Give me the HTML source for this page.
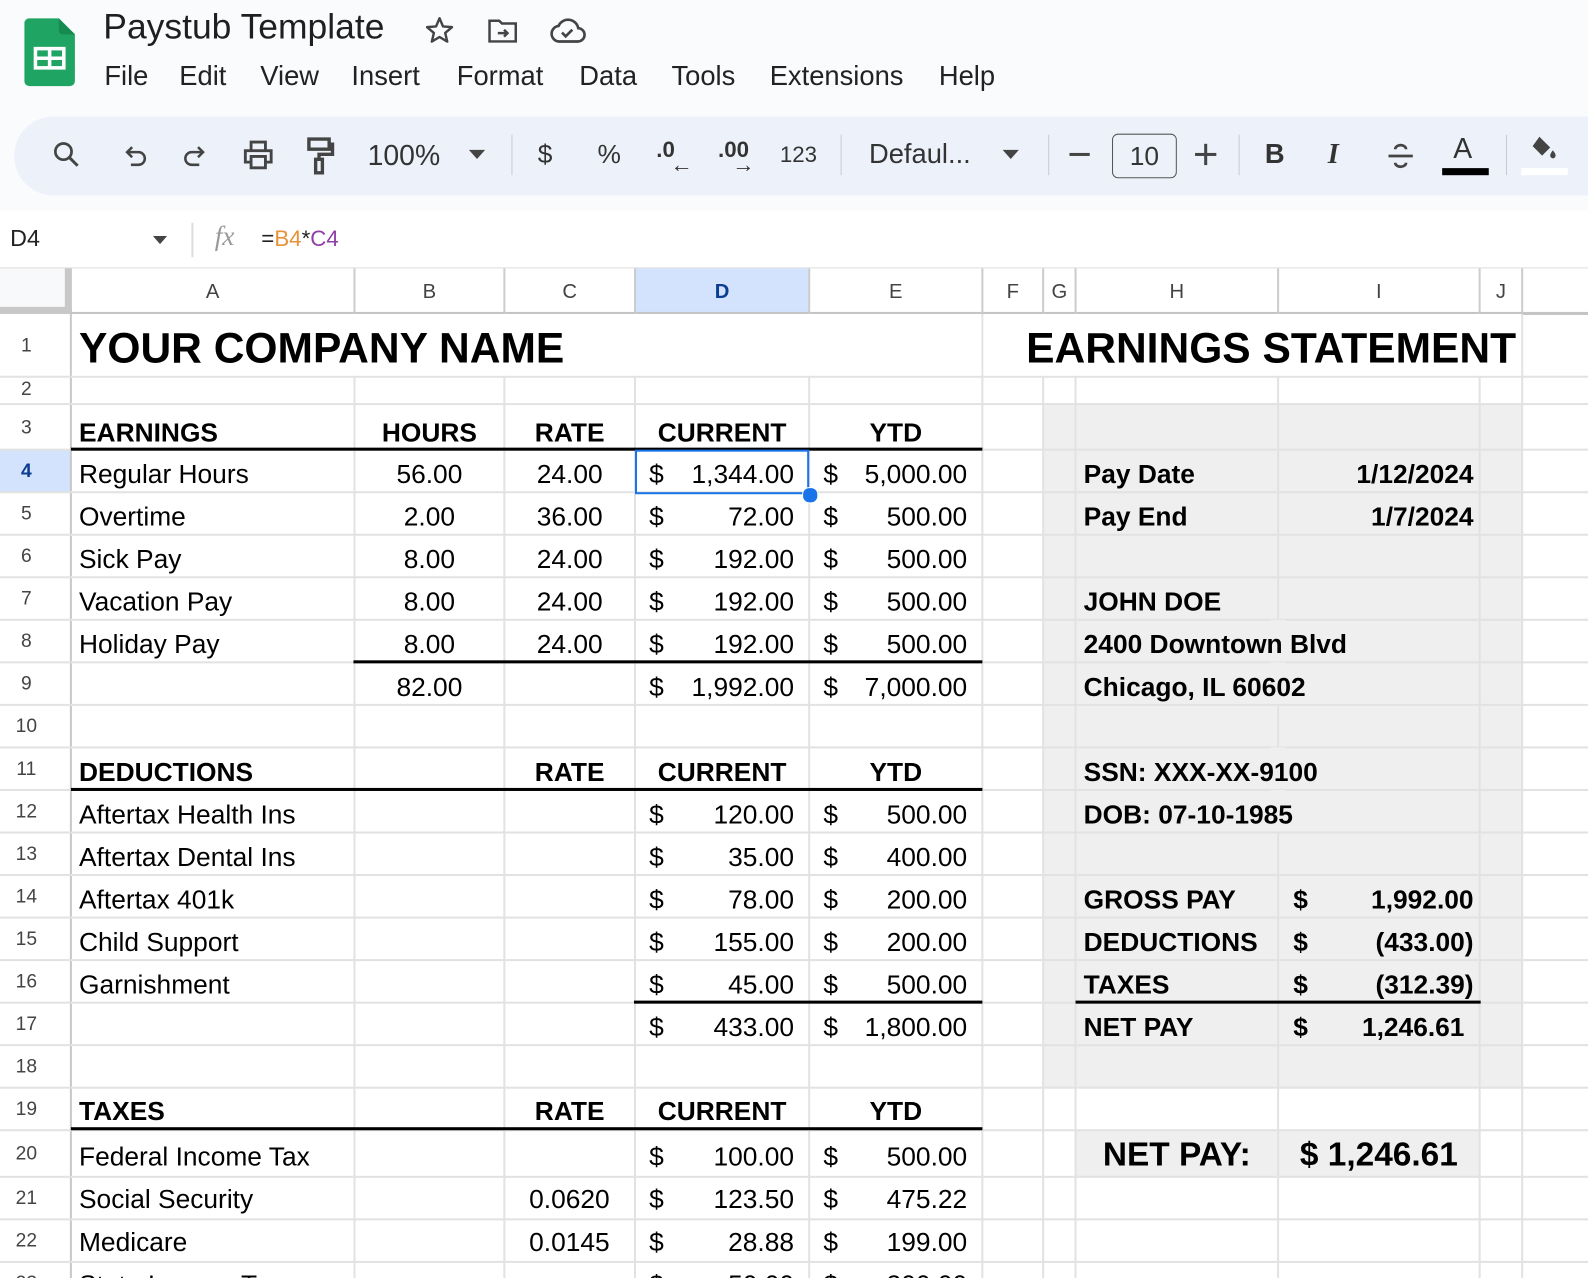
<!DOCTYPE html>
<html><head><meta charset="utf-8">
<style>
html,body{margin:0;padding:0;background:#fff;overflow:hidden;width:1588px;height:1278px}
#w{position:absolute;left:0;top:0;width:1568px;height:1262px;transform:scale(1.01276);transform-origin:0 0;font-family:"Liberation Sans",Arial,sans-serif;color:#000;overflow:hidden;background:#fff}
.a{position:absolute}
.t{position:absolute;height:30px;line-height:30px;font-size:26px;white-space:nowrap}
.b{font-weight:bold}
.c{text-align:center}
.r{text-align:right}
.vl{position:absolute;width:2px;background:#e2e2e2}
.hl{position:absolute;height:2px;background:#e2e2e2}
.tk{position:absolute;height:3px;background:#000}
.rn{position:absolute;left:0;width:52px;text-align:center;font-size:19px;color:#444;height:24px;line-height:24px}
.ch{position:absolute;top:276px;height:24px;line-height:24px;font-size:20px;color:#444;text-align:center}
.mi{position:absolute;top:59px;font-size:27px;color:#222;line-height:32px}
.sep{position:absolute;top:133px;width:1px;height:40px;background:#c8ccd2}
</style></head><body><div id="w">
<div class="a" style="left:0;top:0;width:1568px;height:208px;background:#f9fbfd"></div>
<svg class="a" style="left:24px;top:18px" width="50" height="68" viewBox="0 0 50 68">
<path d="M5 0H34L50 16V62a5 5 0 0 1-5 5H5a5 5 0 0 1-5-5V5a5 5 0 0 1 5-5z" fill="#1fa463"/>
<path d="M34 0L50 16H38a4 4 0 0 1-4-4z" fill="#168a51"/>
<rect x="11" y="30" width="28" height="19" fill="none" stroke="#fff" stroke-width="3.5"/>
<line x1="25" y1="30" x2="25" y2="49" stroke="#fff" stroke-width="3.5"/>
<line x1="11" y1="39.5" x2="39" y2="39.5" stroke="#fff" stroke-width="3.5"/>
</svg>
<div class="a" style="left:102px;top:7px;font-size:35px;line-height:40px;color:#1f1f1f">Paystub Template</div>
<svg class="a" style="left:418px;top:14px" width="32" height="32" viewBox="0 0 24 24"><path d="M12 3l2.6 6.1 6.6.5-5 4.3 1.5 6.4L12 16.9l-5.7 3.4 1.5-6.4-5-4.3 6.6-.5z" fill="none" stroke="#444" stroke-width="1.8" stroke-linejoin="round"/></svg>
<svg class="a" style="left:480px;top:15px" width="34" height="30" viewBox="0 0 24 22"><path d="M2 4h7l2 2h10v13H2z" fill="none" stroke="#444" stroke-width="1.8"/><path d="M8 13h7M12.5 10.5l2.5 2.5-2.5 2.5" fill="none" stroke="#444" stroke-width="1.8"/></svg>
<svg class="a" style="left:541px;top:16px" width="38" height="28" viewBox="0 0 26 19"><path d="M7 17h13a4.5 4.5 0 0 0 .5-9 7 7 0 0 0-13.3-1.5A5.3 5.3 0 0 0 7 17z" fill="none" stroke="#444" stroke-width="1.8"/><path d="M9.5 11l2.5 2.5 4.5-4.5" fill="none" stroke="#444" stroke-width="1.8"/></svg>
<div class="mi" style="left:103px">File</div>
<div class="mi" style="left:177px">Edit</div>
<div class="mi" style="left:257px">View</div>
<div class="mi" style="left:347px">Insert</div>
<div class="mi" style="left:451px">Format</div>
<div class="mi" style="left:572px">Data</div>
<div class="mi" style="left:663px">Tools</div>
<div class="mi" style="left:760px">Extensions</div>
<div class="mi" style="left:927px">Help</div>
<div class="a" style="left:14px;top:115px;width:1600px;height:78px;border-radius:39px;background:#edf2fa"></div>
<svg class="a" style="left:50px;top:137px" width="32" height="32" viewBox="0 0 24 24"><circle cx="9.5" cy="9.5" r="6" fill="none" stroke="#444" stroke-width="2"/><path d="M14 14l6 6" stroke="#444" stroke-width="2.2"/></svg>
<svg class="a" style="left:118px;top:139px" width="30" height="30" viewBox="0 0 24 24"><path d="M7 9h8a5 5 0 0 1 0 10H9" fill="none" stroke="#444" stroke-width="2"/><path d="M10 5L6 9l4 4" fill="none" stroke="#444" stroke-width="2"/></svg>
<svg class="a" style="left:178px;top:139px" width="30" height="30" viewBox="0 0 24 24"><path d="M17 9H9a5 5 0 0 0 0 10h6" fill="none" stroke="#444" stroke-width="2"/><path d="M14 5l4 4-4 4" fill="none" stroke="#444" stroke-width="2"/></svg>
<svg class="a" style="left:238px;top:136px" width="34" height="34" viewBox="0 0 24 24"><path d="M7 8V3h10v5M6 17H3V9h18v8h-3M7 13h10v8H7z" fill="none" stroke="#444" stroke-width="2"/></svg>
<svg class="a" style="left:298px;top:134px" width="34" height="40" viewBox="0 0 20 24"><path d="M4 2h12v6H4zM16 5h2v6h-8v3M8 14h4v8H8z" fill="none" stroke="#444" stroke-width="2"/></svg>
<div class="a" style="left:363px;top:138px;font-size:28px;color:#333;line-height:32px">100%</div>
<svg class="a" style="left:462px;top:147px" width="18" height="12"><path d="M1 1h16l-8 9z" fill="#444"/></svg>
<div class="sep" style="left:505px"></div>
<div class="a" style="left:531px;top:137px;font-size:26px;color:#333">$</div>
<div class="a" style="left:590px;top:137px;font-size:26px;color:#333">%</div>
<div class="a" style="left:648px;top:135px;font-size:22px;color:#333;font-weight:bold">.0</div>
<div class="a" style="left:662px;top:150px;font-size:22px;color:#333;font-weight:bold">←</div>
<div class="a" style="left:709px;top:135px;font-size:22px;color:#333;font-weight:bold">.00</div>
<div class="a" style="left:723px;top:150px;font-size:22px;color:#333;font-weight:bold">→</div>
<div class="a" style="left:770px;top:140px;font-size:22px;color:#333">123</div>
<div class="sep" style="left:830px"></div>
<div class="a" style="left:858px;top:137px;font-size:27px;color:#333">Defaul...</div>
<svg class="a" style="left:989px;top:147px" width="18" height="12"><path d="M1 1h16l-8 9z" fill="#444"/></svg>
<div class="sep" style="left:1035px"></div>
<div class="a" style="left:1056px;top:151px;width:20px;height:3px;background:#444"></div>
<div class="a" style="left:1098px;top:132px;width:62px;height:42px;border:1.5px solid #555;border-radius:6px;text-align:center;line-height:42px;font-size:26px;color:#333">10</div>
<div class="a" style="left:1180px;top:151px;width:21px;height:3px;background:#444"></div>
<div class="a" style="left:1189px;top:142px;width:3px;height:21px;background:#444"></div>
<div class="sep" style="left:1223px"></div>
<div class="a" style="left:1249px;top:137px;font-size:27px;color:#333;font-weight:bold">B</div>
<div class="a" style="left:1311px;top:137px;font-size:28px;color:#333;font-style:italic;font-family:'Liberation Serif',serif;font-weight:bold">I</div>
<svg class="a" style="left:1366px;top:138px" width="34" height="32" viewBox="0 0 24 24"><path d="M8 7a4 3 0 0 1 8 0M8 17a4 3 0 0 0 8 0M3 12h18" fill="none" stroke="#444" stroke-width="2"/></svg>
<div class="a" style="left:1435px;top:131px;font-size:28px;color:#333">A</div>
<div class="a" style="left:1424px;top:166px;width:46px;height:7px;background:#000"></div>
<div class="sep" style="left:1487px"></div>
<svg class="a" style="left:1507px;top:131px" width="34" height="32" viewBox="0 0 24 24"><path d="M9 3l8 8-6 6-7-7z" fill="#444"/><path d="M19 13c-1.5 2-2 3-2 4a2 2 0 0 0 4 0c0-1-.5-2-2-4z" fill="#444"/></svg>
<div class="a" style="left:1502px;top:166px;width:46px;height:7px;background:#fff"></div>
<div class="a" style="left:10px;top:222px;font-size:23px;color:#222">D4</div>
<svg class="a" style="left:150px;top:232px" width="16" height="10"><path d="M1 1h14l-7 8z" fill="#444"/></svg>
<div class="a" style="left:189px;top:220px;width:2px;height:34px;background:#ddd"></div>
<div class="a" style="left:212px;top:218px;font-size:27px;color:#999;font-style:italic;font-family:'Liberation Serif',serif">fx</div>
<div class="a" style="left:258px;top:223px;font-size:22px;color:#222">=<span style="color:#e8923a">B4</span>*<span style="color:#8e3fa6">C4</span></div>
<div class="a" style="left:0;top:264px;width:1568px;height:2px;background:#ddd"></div>
<div class="a" style="left:70px;top:265px;width:1498px;height:45px;background:#fff"></div>
<div class="a" style="left:0;top:265px;width:64px;height:38px;background:#f8f9fa"></div>
<div class="a" style="left:64px;top:265px;width:7px;height:45px;background:#c8c8c8"></div>
<div class="a" style="left:0;top:303px;width:71px;height:7px;background:#c8c8c8"></div>
<div class="a" style="left:627px;top:265px;width:172px;height:44px;background:#d3e3fd"></div>
<div class="ch" style="left:70px;width:280px">A</div>
<div class="ch" style="left:350px;width:148px">B</div>
<div class="ch" style="left:498px;width:129px">C</div>
<div class="ch" style="left:627px;width:172px;color:#0b3d91;font-weight:bold">D</div>
<div class="ch" style="left:799px;width:171px">E</div>
<div class="ch" style="left:970px;width:60px">F</div>
<div class="ch" style="left:1030px;width:32px">G</div>
<div class="ch" style="left:1062px;width:200px">H</div>
<div class="ch" style="left:1262px;width:199px">I</div>
<div class="ch" style="left:1461px;width:42px">J</div>
<div class="a" style="left:70px;top:308px;width:1498px;height:3px;background:#c4c4c4"></div>
<div class="vl" style="left:349px;top:265px;height:44px;background:#ccc"></div>
<div class="vl" style="left:497px;top:265px;height:44px;background:#ccc"></div>
<div class="vl" style="left:626px;top:265px;height:44px;background:#ccc"></div>
<div class="vl" style="left:798px;top:265px;height:44px;background:#ccc"></div>
<div class="vl" style="left:969px;top:265px;height:44px;background:#ccc"></div>
<div class="vl" style="left:1029px;top:265px;height:44px;background:#ccc"></div>
<div class="vl" style="left:1061px;top:265px;height:44px;background:#ccc"></div>
<div class="vl" style="left:1261px;top:265px;height:44px;background:#ccc"></div>
<div class="vl" style="left:1460px;top:265px;height:44px;background:#ccc"></div>
<div class="vl" style="left:1502px;top:265px;height:44px;background:#ccc"></div>
<div class="a" style="left:1030px;top:399px;width:473px;height:675px;background:#efefef"></div>
<div class="a" style="left:1062px;top:1116px;width:399px;height:46px;background:#efefef"></div>
<div class="a" style="left:0;top:444px;width:70px;height:42px;background:#d3e3fd"></div>
<div class="vl" style="left:69px;top:310px;height:952px;background:#c8c8c8"></div>
<div class="vl" style="left:349px;top:310px;height:952px"></div>
<div class="vl" style="left:497px;top:310px;height:952px"></div>
<div class="vl" style="left:626px;top:310px;height:952px"></div>
<div class="vl" style="left:798px;top:310px;height:952px"></div>
<div class="vl" style="left:969px;top:310px;height:952px"></div>
<div class="vl" style="left:1029px;top:310px;height:952px"></div>
<div class="vl" style="left:1061px;top:310px;height:952px"></div>
<div class="vl" style="left:1261px;top:310px;height:952px"></div>
<div class="vl" style="left:1460px;top:310px;height:952px"></div>
<div class="vl" style="left:1502px;top:310px;height:952px"></div>
<div class="hl" style="left:0;top:371px;width:1568px"></div>
<div class="hl" style="left:0;top:398px;width:1568px"></div>
<div class="hl" style="left:0;top:443px;width:1568px"></div>
<div class="hl" style="left:0;top:485px;width:1568px"></div>
<div class="hl" style="left:0;top:527px;width:1568px"></div>
<div class="hl" style="left:0;top:569px;width:1568px"></div>
<div class="hl" style="left:0;top:611px;width:1568px"></div>
<div class="hl" style="left:0;top:653px;width:1568px"></div>
<div class="hl" style="left:0;top:695px;width:1568px"></div>
<div class="hl" style="left:0;top:737px;width:1568px"></div>
<div class="hl" style="left:0;top:779px;width:1568px"></div>
<div class="hl" style="left:0;top:821px;width:1568px"></div>
<div class="hl" style="left:0;top:863px;width:1568px"></div>
<div class="hl" style="left:0;top:905px;width:1568px"></div>
<div class="hl" style="left:0;top:947px;width:1568px"></div>
<div class="hl" style="left:0;top:989px;width:1568px"></div>
<div class="hl" style="left:0;top:1031px;width:1568px"></div>
<div class="hl" style="left:0;top:1073px;width:1568px"></div>
<div class="hl" style="left:0;top:1115px;width:1568px"></div>
<div class="hl" style="left:0;top:1161px;width:1568px"></div>
<div class="hl" style="left:0;top:1203px;width:1568px"></div>
<div class="hl" style="left:0;top:1245px;width:1568px"></div>
<div class="a" style="left:71px;top:310px;width:898px;height:61px;background:#fff"></div>
<div class="a" style="left:971px;top:310px;width:531px;height:61px;background:#fff"></div>
<div class="a" style="left:1255px;top:612px;width:14px;height:41px;background:#efefef"></div>
<div class="a" style="left:1255px;top:654px;width:14px;height:41px;background:#efefef"></div>
<div class="a" style="left:1255px;top:738px;width:14px;height:41px;background:#efefef"></div>
<div class="a" style="left:1255px;top:780px;width:14px;height:41px;background:#efefef"></div>
<div class="tk" style="left:70px;top:442px;width:900px"></div>
<div class="tk" style="left:349px;top:652px;width:621px"></div>
<div class="tk" style="left:70px;top:778px;width:900px"></div>
<div class="tk" style="left:626px;top:988px;width:344px"></div>
<div class="tk" style="left:70px;top:1113px;width:900px"></div>
<div class="tk" style="left:1062px;top:988px;width:400px"></div>
<div class="a" style="left:627px;top:444px;width:168px;height:40px;border:2px solid #1a73e8"></div>
<div class="a" style="left:792px;top:481px;width:14px;height:14px;border-radius:7px;background:#1a73e8;border:1px solid #fff"></div>
<div class="rn" style="top:330px">1</div>
<div class="rn" style="top:373px">2</div>
<div class="rn" style="top:411px">3</div>
<div class="rn" style="top:454px;color:#0b3d91;font-weight:bold">4</div>
<div class="rn" style="top:496px">5</div>
<div class="rn" style="top:538px">6</div>
<div class="rn" style="top:580px">7</div>
<div class="rn" style="top:622px">8</div>
<div class="rn" style="top:664px">9</div>
<div class="rn" style="top:706px">10</div>
<div class="rn" style="top:748px">11</div>
<div class="rn" style="top:790px">12</div>
<div class="rn" style="top:832px">13</div>
<div class="rn" style="top:874px">14</div>
<div class="rn" style="top:916px">15</div>
<div class="rn" style="top:958px">16</div>
<div class="rn" style="top:1000px">17</div>
<div class="rn" style="top:1042px">18</div>
<div class="rn" style="top:1084px">19</div>
<div class="rn" style="top:1128px">20</div>
<div class="rn" style="top:1172px">21</div>
<div class="rn" style="top:1214px">22</div>
<div class="rn" style="top:1256px">23</div>
<div class="a b" style="left:78px;top:319px;font-size:42px;line-height:50px">YOUR COMPANY NAME</div>
<div class="a b" style="left:960px;width:537px;top:319px;font-size:42px;line-height:50px;text-align:right">EARNINGS STATEMENT</div>

<div class="t b" style="left:78px;top:412px">EARNINGS</div>
<div class="t b c" style="left:350px;width:148px;top:412px">HOURS</div>
<div class="t b c" style="left:498px;width:129px;top:412px">RATE</div>
<div class="t b c" style="left:627px;width:172px;top:412px">CURRENT</div>
<div class="t b c" style="left:799px;width:171px;top:412px">YTD</div>

<div class="t" style="left:78px;top:453px">Regular Hours</div>
<div class="t c" style="left:350px;width:148px;top:453px">56.00</div>
<div class="t c" style="left:498px;width:129px;top:453px">24.00</div>
<div class="t" style="left:641px;top:453px">$</div><div class="t r" style="right:784px;top:453px">1,344.00</div>
<div class="t" style="left:813px;top:453px">$</div><div class="t r" style="right:613px;top:453px">5,000.00</div>

<div class="t" style="left:78px;top:495px">Overtime</div>
<div class="t c" style="left:350px;width:148px;top:495px">2.00</div>
<div class="t c" style="left:498px;width:129px;top:495px">36.00</div>
<div class="t" style="left:641px;top:495px">$</div><div class="t r" style="right:784px;top:495px">72.00</div>
<div class="t" style="left:813px;top:495px">$</div><div class="t r" style="right:613px;top:495px">500.00</div>

<div class="t" style="left:78px;top:537px">Sick Pay</div>
<div class="t c" style="left:350px;width:148px;top:537px">8.00</div>
<div class="t c" style="left:498px;width:129px;top:537px">24.00</div>
<div class="t" style="left:641px;top:537px">$</div><div class="t r" style="right:784px;top:537px">192.00</div>
<div class="t" style="left:813px;top:537px">$</div><div class="t r" style="right:613px;top:537px">500.00</div>

<div class="t" style="left:78px;top:579px">Vacation Pay</div>
<div class="t c" style="left:350px;width:148px;top:579px">8.00</div>
<div class="t c" style="left:498px;width:129px;top:579px">24.00</div>
<div class="t" style="left:641px;top:579px">$</div><div class="t r" style="right:784px;top:579px">192.00</div>
<div class="t" style="left:813px;top:579px">$</div><div class="t r" style="right:613px;top:579px">500.00</div>

<div class="t" style="left:78px;top:621px">Holiday Pay</div>
<div class="t c" style="left:350px;width:148px;top:621px">8.00</div>
<div class="t c" style="left:498px;width:129px;top:621px">24.00</div>
<div class="t" style="left:641px;top:621px">$</div><div class="t r" style="right:784px;top:621px">192.00</div>
<div class="t" style="left:813px;top:621px">$</div><div class="t r" style="right:613px;top:621px">500.00</div>

<div class="t c" style="left:350px;width:148px;top:663px">82.00</div>
<div class="t" style="left:641px;top:663px">$</div><div class="t r" style="right:784px;top:663px">1,992.00</div>
<div class="t" style="left:813px;top:663px">$</div><div class="t r" style="right:613px;top:663px">7,000.00</div>

<div class="t b" style="left:78px;top:747px">DEDUCTIONS</div>
<div class="t b c" style="left:498px;width:129px;top:747px">RATE</div>
<div class="t b c" style="left:627px;width:172px;top:747px">CURRENT</div>
<div class="t b c" style="left:799px;width:171px;top:747px">YTD</div>

<div class="t" style="left:78px;top:789px">Aftertax Health Ins</div>
<div class="t" style="left:641px;top:789px">$</div><div class="t r" style="right:784px;top:789px">120.00</div>
<div class="t" style="left:813px;top:789px">$</div><div class="t r" style="right:613px;top:789px">500.00</div>

<div class="t" style="left:78px;top:831px">Aftertax Dental Ins</div>
<div class="t" style="left:641px;top:831px">$</div><div class="t r" style="right:784px;top:831px">35.00</div>
<div class="t" style="left:813px;top:831px">$</div><div class="t r" style="right:613px;top:831px">400.00</div>

<div class="t" style="left:78px;top:873px">Aftertax 401k</div>
<div class="t" style="left:641px;top:873px">$</div><div class="t r" style="right:784px;top:873px">78.00</div>
<div class="t" style="left:813px;top:873px">$</div><div class="t r" style="right:613px;top:873px">200.00</div>

<div class="t" style="left:78px;top:915px">Child Support</div>
<div class="t" style="left:641px;top:915px">$</div><div class="t r" style="right:784px;top:915px">155.00</div>
<div class="t" style="left:813px;top:915px">$</div><div class="t r" style="right:613px;top:915px">200.00</div>

<div class="t" style="left:78px;top:957px">Garnishment</div>
<div class="t" style="left:641px;top:957px">$</div><div class="t r" style="right:784px;top:957px">45.00</div>
<div class="t" style="left:813px;top:957px">$</div><div class="t r" style="right:613px;top:957px">500.00</div>

<div class="t" style="left:641px;top:999px">$</div><div class="t r" style="right:784px;top:999px">433.00</div>
<div class="t" style="left:813px;top:999px">$</div><div class="t r" style="right:613px;top:999px">1,800.00</div>

<div class="t b" style="left:78px;top:1082px">TAXES</div>
<div class="t b c" style="left:498px;width:129px;top:1082px">RATE</div>
<div class="t b c" style="left:627px;width:172px;top:1082px">CURRENT</div>
<div class="t b c" style="left:799px;width:171px;top:1082px">YTD</div>

<div class="t" style="left:78px;top:1127px">Federal Income Tax</div>
<div class="t" style="left:641px;top:1127px">$</div><div class="t r" style="right:784px;top:1127px">100.00</div>
<div class="t" style="left:813px;top:1127px">$</div><div class="t r" style="right:613px;top:1127px">500.00</div>

<div class="t" style="left:78px;top:1169px">Social Security</div>
<div class="t r" style="right:966px;top:1169px">0.0620</div>
<div class="t" style="left:641px;top:1169px">$</div><div class="t r" style="right:784px;top:1169px">123.50</div>
<div class="t" style="left:813px;top:1169px">$</div><div class="t r" style="right:613px;top:1169px">475.22</div>

<div class="t" style="left:78px;top:1211px">Medicare</div>
<div class="t r" style="right:966px;top:1211px">0.0145</div>
<div class="t" style="left:641px;top:1211px">$</div><div class="t r" style="right:784px;top:1211px">28.88</div>
<div class="t" style="left:813px;top:1211px">$</div><div class="t r" style="right:613px;top:1211px">199.00</div>

<div class="t" style="left:78px;top:1253px">State Income Tax</div>
<div class="t" style="left:641px;top:1253px">$</div><div class="t r" style="right:784px;top:1253px">50.00</div>
<div class="t" style="left:813px;top:1253px">$</div><div class="t r" style="right:613px;top:1253px">300.00</div>

<div class="t b" style="left:1070px;top:453px">Pay Date</div>
<div class="t b r" style="right:113px;top:453px">1/12/2024</div>
<div class="t b" style="left:1070px;top:495px">Pay End</div>
<div class="t b r" style="right:113px;top:495px">1/7/2024</div>
<div class="t b" style="left:1070px;top:579px">JOHN DOE</div>
<div class="t b" style="left:1070px;top:621px">2400 Downtown Blvd</div>
<div class="t b" style="left:1070px;top:663px">Chicago, IL 60602</div>
<div class="t b" style="left:1070px;top:747px">SSN: XXX-XX-9100</div>
<div class="t b" style="left:1070px;top:789px">DOB: 07-10-1985</div>
<div class="t b" style="left:1070px;top:873px">GROSS PAY</div>
<div class="t b" style="left:1277px;top:873px">$</div><div class="t b r" style="right:113px;top:873px">1,992.00</div>
<div class="t b" style="left:1070px;top:915px">DEDUCTIONS</div>
<div class="t b" style="left:1277px;top:915px">$</div><div class="t b r" style="right:113px;top:915px">(433.00)</div>
<div class="t b" style="left:1070px;top:957px">TAXES</div>
<div class="t b" style="left:1277px;top:957px">$</div><div class="t b r" style="right:113px;top:957px">(312.39)</div>
<div class="t b" style="left:1070px;top:999px">NET PAY</div>
<div class="t b" style="left:1277px;top:999px">$</div><div class="t b r" style="right:122px;top:999px">1,246.61</div>
<div class="a b c" style="left:1062px;width:200px;top:1120px;font-size:33px;line-height:40px">NET PAY:</div>
<div class="a b c" style="left:1262px;width:199px;top:1120px;font-size:33px;line-height:40px">$ 1,246.61</div>
</div></body></html>
